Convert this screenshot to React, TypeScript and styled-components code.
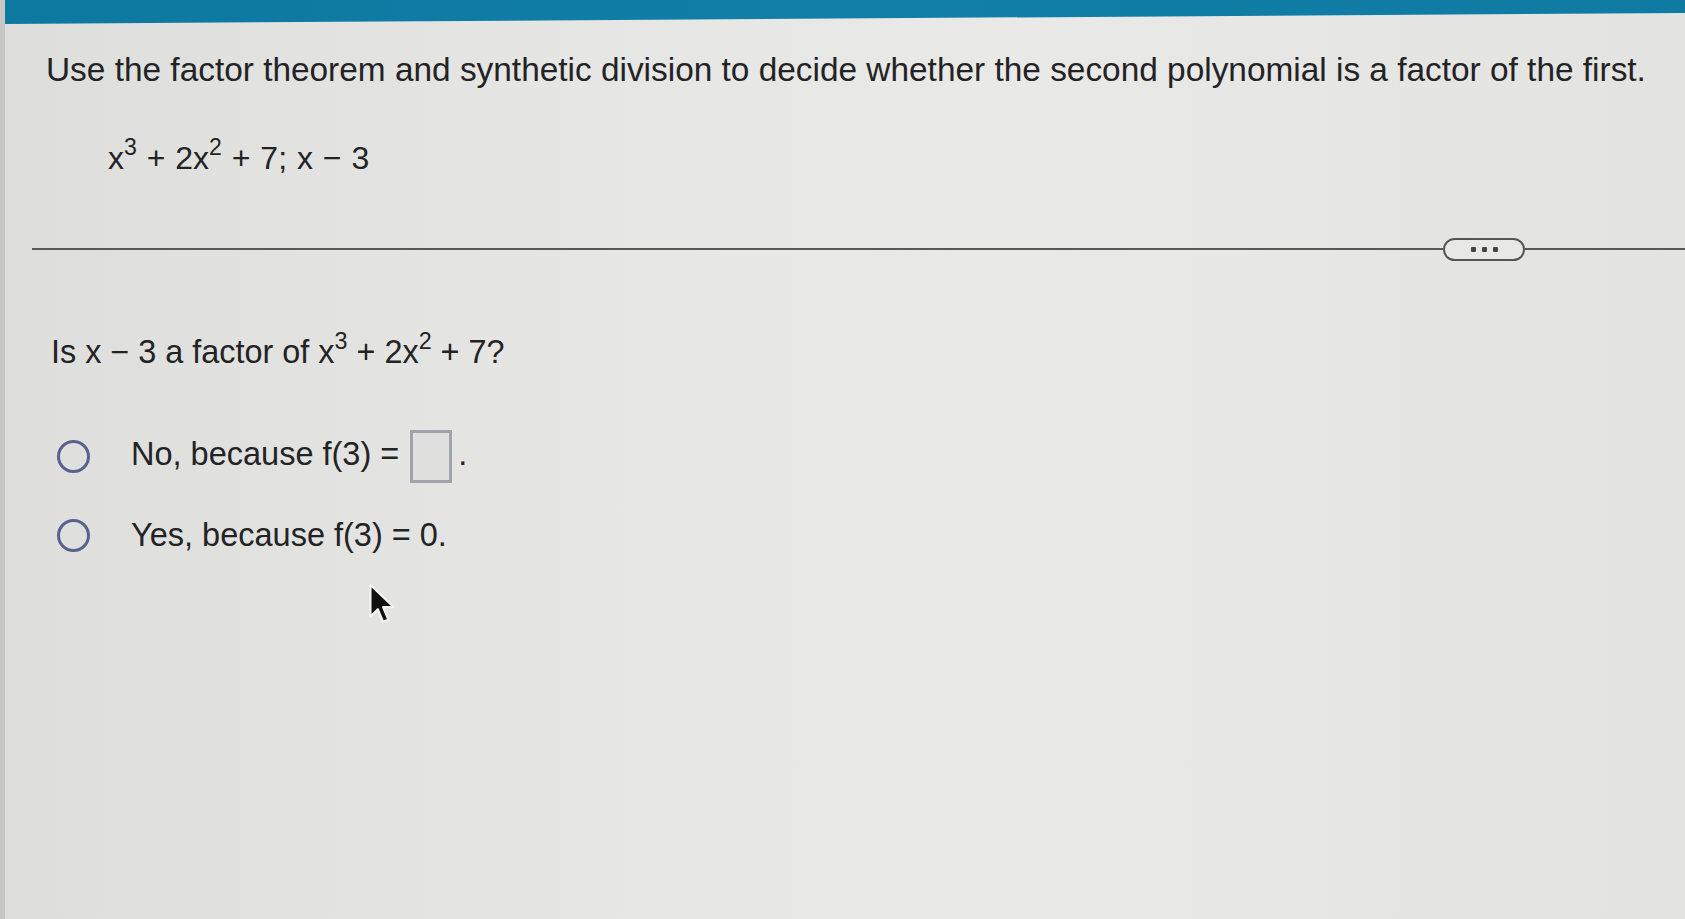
import React from "react";
import styled, { createGlobalStyle } from "styled-components";

const GlobalStyle = createGlobalStyle`
  html, body {
    margin: 0;
    padding: 0;
    background: #e4e4e2;
  }
  body {
    font-family: "Liberation Sans", Arial, sans-serif;
    color: #232325;
  }
`;

const Page = styled.div`
  position: relative;
  min-height: 100vh;
  box-sizing: border-box;
  border-left: 5px solid #c7c7c5;
  background: linear-gradient(
    90deg,
    #dededc 0%,
    #e6e6e4 35%,
    #e9e9e7 60%,
    #e3e3e1 100%
  );
  overflow: hidden;
`;

const TopBar = styled.div`
  height: 24px;
  background: linear-gradient(90deg, #0d78a0, #117fa8 50%, #0f7ba3);
  clip-path: polygon(0 0, 100% 0, 100% 13px, 0 24px);
`;

const Title = styled.h1`
  margin: 28px 0 0 41px;
  font-size: 33.4px;
  font-weight: 400;
  line-height: 36px;
  white-space: nowrap;
`;

const Expression = styled.div`
  margin: 52px 0 0 103px;
  font-size: 32px;
  line-height: 36px;
  word-spacing: 1px;
`;

const Sup = styled.sup`
  font-size: 0.72em;
  line-height: 0;
  vertical-align: 0.62em;
`;

const DividerRow = styled.div`
  display: flex;
  align-items: center;
  height: 24px;
  margin: 61px 0 0 27px;
`;

const Rule = styled.div<{ $grow?: boolean }>`
  height: 2px;
  background: #58585a;
  flex: ${(p) => (p.$grow ? "1" : "0 0 auto")};
`;

const MorePill = styled.div`
  flex: 0 0 auto;
  width: 78px;
  height: 19px;
  border: 2.5px solid #565658;
  border-radius: 12px;
  background: #e8e8e6;
  display: flex;
  align-items: center;
  justify-content: center;
  gap: 6px;
`;

const Dot = styled.span`
  width: 5px;
  height: 5px;
  border-radius: 1px;
  background: #454547;
`;

const Question = styled.div`
  margin: 73px 0 0 46px;
  font-size: 32.4px;
  line-height: 36px;
`;

const Options = styled.div`
  display: flex;
  flex-direction: column;
  gap: 25px;
  margin: 59px 0 0 52px;
`;

const OptionRow = styled.label`
  display: flex;
  align-items: center;
  height: 54px;
  font-size: 32.5px;
`;

const Radio = styled.span`
  width: 27px;
  height: 27px;
  border: 3.5px solid #5a618e;
  border-radius: 50%;
  margin-right: 41px;
  flex: 0 0 auto;
`;

const AnswerBox = styled.span`
  display: inline-block;
  width: 36px;
  height: 47px;
  margin: 0 6px 0 11px;
  border: 3px solid #a0a2ac;
  background: #dfdfdd;
  vertical-align: middle;
`;

const Cursor = styled.svg`
  position: absolute;
  left: 362px;
  top: 583px;
`;

export default function App() {
  return (
    <>
      <GlobalStyle />
      <Page>
        <TopBar />
        <Title>
          Use the factor theorem and synthetic division to decide whether the
          second polynomial is a factor of the first.
        </Title>
        <Expression>
          x<Sup>3</Sup> + 2x<Sup>2</Sup> + 7; x − 3
        </Expression>
        <DividerRow>
          <Rule $grow />
          <MorePill>
            <Dot />
            <Dot />
            <Dot />
          </MorePill>
          <Rule style={{ width: 160 }} />
        </DividerRow>
        <Question>
          Is x − 3 a factor of x<Sup>3</Sup> + 2x<Sup>2</Sup> + 7?
        </Question>
        <Options>
          <OptionRow>
            <Radio />
            <span>
              No, because f(3) =
              <AnswerBox />.
            </span>
          </OptionRow>
          <OptionRow>
            <Radio />
            <span>Yes, because f(3) = 0.</span>
          </OptionRow>
        </Options>
        <Cursor width="30" height="44" viewBox="0 0 28 42">
          <path
            d="M3 2 L3 32 L10 25 L15 37 L20 35 L15 23 L25 23 Z"
            fill="#111"
            stroke="#f4f4f2"
            strokeWidth="2"
            strokeLinejoin="round"
          />
        </Cursor>
      </Page>
    </>
  );
}
